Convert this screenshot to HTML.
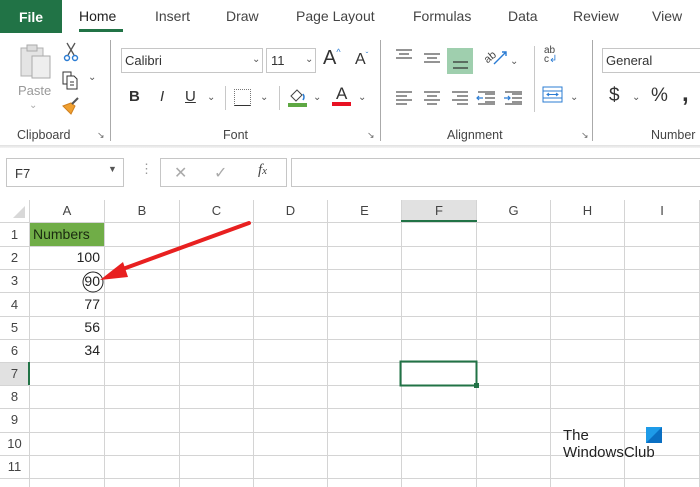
<!DOCTYPE html>
<html><head><meta charset="utf-8"><style>
*{margin:0;padding:0;box-sizing:border-box}
body{width:700px;height:487px;overflow:hidden;background:#fff;font-family:"Liberation Sans",sans-serif;position:relative;color:#333}
.a{position:absolute}
.tab{position:absolute;top:8px;font-size:14px;color:#444}
.lbl{position:absolute;top:128px;font-size:12.5px;color:#444}
.vs{position:absolute;width:1px;background:#c8c8c8}
.chev{position:absolute;font-size:10px;color:#555}
.ch{position:absolute;top:200px;height:22px;font-size:13px;color:#444;text-align:center;line-height:22px}
.rh{position:absolute;left:0;width:29px;font-size:13px;color:#444;text-align:center}
.num{position:absolute;width:73px;text-align:right;padding-right:3px;font-size:14px;color:#222}
</style></head><body>
<!-- tabs -->
<div class="a" style="left:0;top:0;width:62px;height:33px;background:#217346;color:#fff;font-size:14px;font-weight:bold;text-align:center;line-height:34px">File</div>
<div class="tab" style="left:79px;color:#222">Home</div>
<div class="a" style="left:79px;top:29px;width:44px;height:3px;background:#217346"></div>
<div class="tab" style="left:155px">Insert</div>
<div class="tab" style="left:226px">Draw</div>
<div class="tab" style="left:296px">Page Layout</div>
<div class="tab" style="left:413px">Formulas</div>
<div class="tab" style="left:508px">Data</div>
<div class="tab" style="left:573px">Review</div>
<div class="tab" style="left:652px">View</div>
<!-- ribbon -->
<div class="a" style="left:0;top:145px;width:700px;height:3px;background:linear-gradient(#e0e0e0,#f4f4f4)"></div>
<!-- clipboard -->
<svg class="a" style="left:18px;top:42px" width="40" height="40"><rect x="3" y="6" width="22" height="28" fill="#e4e4e4" stroke="#b0b0b0"/><rect x="9" y="3" width="10" height="6" fill="#ddd" stroke="#aaa"/><rect x="14" y="14" width="18" height="22" fill="#eee" stroke="#aaa"/></svg>
<div class="a" style="left:18px;top:83px;font-size:13px;color:#999">Paste</div>
<div class="chev" style="left:29px;top:100px;color:#aaa">⌄</div>
<svg class="a" style="left:63px;top:42px" width="16" height="20"><path d="M4 1 L11 13 M12 1 L5 13" stroke="#555" stroke-width="1.3" fill="none"/><circle cx="4" cy="16" r="2.5" stroke="#2b7cd3" fill="none" stroke-width="1.4"/><circle cx="12" cy="16" r="2.5" stroke="#2b7cd3" fill="none" stroke-width="1.4"/></svg>
<svg class="a" style="left:61px;top:70px" width="20" height="20"><path d="M2 2h8v12H2z" fill="none" stroke="#333"/><path d="M6 6h7l3 3v10H6z" fill="#fff" stroke="#333"/><path d="M9 12h4M9 15h4" stroke="#333"/></svg>
<div class="chev" style="left:88px;top:72px">⌄</div>
<svg class="a" style="left:61px;top:96px" width="20" height="20"><path d="M2 10 L10 18 L14 10 L10 7z" fill="#f0a030" stroke="#d08020"/><path d="M11 8 L17 2" stroke="#555" stroke-width="2"/></svg>
<div class="lbl" style="left:17px">Clipboard</div>
<div class="a" style="left:97px;top:130px;font-size:9px;color:#666">↘</div>
<div class="vs" style="left:110px;top:40px;height:101px;background:#aaa"></div>
<!-- font -->
<div class="a" style="left:121px;top:48px;width:142px;height:25px;border:1px solid #c6c6c6;font-size:13px;padding:4px 3px;color:#333">Calibri</div>
<div class="chev" style="left:252px;top:54px">⌄</div>
<div class="a" style="left:266px;top:48px;width:50px;height:25px;border:1px solid #c6c6c6;font-size:13px;padding:4px 4px;color:#333">11</div>
<div class="chev" style="left:305px;top:54px">⌄</div>
<div class="a" style="left:323px;top:47px;font-size:20px;color:#333">A<span style="font-size:9px;color:#2b7cd3;vertical-align:top">^</span></div>
<div class="a" style="left:355px;top:51px;font-size:16px;color:#333">A<span style="font-size:8px;color:#2b7cd3;vertical-align:top">ˇ</span></div>
<div class="a" style="left:129px;top:88px;font-size:15px;font-weight:bold;color:#333">B</div>
<div class="a" style="left:160px;top:88px;font-size:15px;font-style:italic;color:#333">I</div>
<div class="a" style="left:185px;top:88px;font-size:15px;text-decoration:underline;color:#333">U</div>
<div class="chev" style="left:207px;top:92px">⌄</div>
<div class="vs" style="left:225px;top:86px;height:24px"></div>
<div class="a" style="left:234px;top:89px;width:17px;height:17px;border:1px dotted #777;border-bottom:1px solid #333"></div>
<div class="chev" style="left:260px;top:92px">⌄</div>
<div class="vs" style="left:279px;top:86px;height:24px"></div>
<svg class="a" style="left:287px;top:86px" width="22" height="22"><path d="M4 10 L10 4 L15 9 L9 15z" fill="none" stroke="#444"/><path d="M16 8 q2 3 0 6" stroke="#2b7cd3" fill="none" stroke-width="1.5"/><rect x="1" y="17" width="19" height="4" fill="#5ea843"/></svg>
<div class="chev" style="left:313px;top:92px">⌄</div>
<div class="a" style="left:336px;top:84px;font-size:17px;color:#333">A</div>
<div class="a" style="left:332px;top:102px;width:19px;height:4px;background:#e81123"></div>
<div class="chev" style="left:358px;top:92px">⌄</div>
<div class="lbl" style="left:223px">Font</div>
<div class="a" style="left:367px;top:130px;font-size:9px;color:#666">↘</div>
<div class="vs" style="left:380px;top:40px;height:101px;background:#aaa"></div>
<!-- alignment -->
<svg class="a" style="left:390px;top:44px" width="180" height="70">
<g stroke="#555" stroke-width="1.2">
<path d="M6 6h16M9 10h10M6 14h16"/>
<path d="M34 10h16M37 14h10M34 18h16"/>
</g>
<rect x="57" y="4" width="26" height="26" fill="#9fcfae"/>
<g stroke="#333" stroke-width="1.2"><path d="M63 18h15M63 24h15"/></g>
<text x="94" y="18" font-size="11" fill="#444" font-family="Liberation Sans" transform="rotate(-40 98 14)">ab</text>
<path d="M104 20 L116 8 M112 8h4v4" stroke="#2b7cd3" fill="none" stroke-width="1.4"/>
<text x="120" y="20" font-size="10" fill="#555">⌄</text>
<g stroke="#555" stroke-width="1.2">
<path d="M6 48h16M6 52h11M6 56h16M6 60h11"/>
<path d="M34 48h16M37 52h10M34 56h16M37 60h10"/>
<path d="M62 48h16M67 52h11M62 56h16M67 60h11"/>
<path d="M95 50h10M95 54h10M95 58h10M88 48h17M88 60h17"/>
<path d="M122 50h10M122 54h10M122 58h10M115 48h17M115 60h17"/>
</g>
<path d="M87 54h6M89 52l-2 2 2 2" stroke="#2b7cd3" fill="none" stroke-width="1.2"/>
<path d="M114 54h6M118 52l2 2-2 2" stroke="#2b7cd3" fill="none" stroke-width="1.2"/>
</svg>
<div class="vs" style="left:534px;top:46px;height:66px"></div>
<div class="a" style="left:544px;top:46px;font-size:10px;line-height:9px;color:#444">ab<br>c<span style="color:#2b7cd3">↲</span></div>
<svg class="a" style="left:542px;top:85px" width="22" height="20"><rect x="1" y="2" width="19" height="15" fill="#fff" stroke="#2b7cd3"/><path d="M1 6h19M1 13h19" stroke="#2b7cd3"/><path d="M5 9.5h11M7 8l-2 1.5 2 1.5M14 8l2 1.5-2 1.5" stroke="#2b7cd3" fill="none"/></svg>
<div class="chev" style="left:570px;top:92px">⌄</div>
<div class="lbl" style="left:447px">Alignment</div>
<div class="a" style="left:581px;top:130px;font-size:9px;color:#666">↘</div>
<div class="vs" style="left:592px;top:40px;height:101px;background:#aaa"></div>
<!-- number -->
<div class="a" style="left:602px;top:48px;width:110px;height:25px;border:1px solid #c6c6c6;font-size:13px;padding:4px 3px;color:#333">General</div>
<div class="a" style="left:609px;top:85px;font-size:19px;color:#333">$</div>
<div class="chev" style="left:632px;top:92px">⌄</div>
<div class="a" style="left:651px;top:85px;font-size:19px;color:#333">%</div>
<div class="a" style="left:682px;top:80px;font-size:24px;font-weight:bold;color:#333">,</div>
<div class="lbl" style="left:651px">Number</div>
<!-- formula bar -->
<div class="a" style="left:6px;top:158px;width:118px;height:29px;border:1px solid #c6c6c6;font-size:13px;padding:7px 8px;color:#333">F7</div>
<div class="a" style="left:108px;top:164px;font-size:9px;color:#555">▼</div>
<div class="a" style="left:140px;top:161px;font-size:13px;color:#999">⋮</div>
<div class="a" style="left:160px;top:158px;width:127px;height:29px;border:1px solid #c6c6c6"></div>
<div class="a" style="left:174px;top:163px;font-size:16px;color:#aaa">✕</div>
<div class="a" style="left:214px;top:163px;font-size:16px;color:#aaa">✓</div>
<div class="a" style="left:258px;top:162px;font-size:15px;font-style:italic;font-family:'Liberation Serif',serif;color:#444">f<span style="font-size:11px">x</span></div>
<div class="a" style="left:291px;top:158px;width:420px;height:29px;border:1px solid #c6c6c6"></div>
<!-- grid -->
<svg class="a" style="left:0;top:0" width="700" height="487">
<rect x="401" y="200" width="76" height="22" fill="#e1e1e1"/>
<rect x="0" y="362" width="29" height="23" fill="#e1e1e1"/>
<path d="M25 206 L25 218 L13 218z" fill="#d8d8d8"/>
<g stroke="#d4d4d4" stroke-width="1">
<path d="M29.5 200V487M104.5 200V487M179.5 200V487M253.5 200V487M327.5 200V487M401.5 200V487M476.5 200V487M550.5 200V487M624.5 200V487M699.5 200V487"/>
<path d="M0 222.5H700M0 246.5H700M0 269.5H700M0 292.5H700M0 316.5H700M0 339.5H700M0 362.5H700M0 385.5H700M0 408.5H700M0 432.5H700M0 455.5H700M0 478.5H700"/>
</g>
<rect x="401" y="220" width="76" height="2" fill="#217346"/>
<rect x="28" y="362" width="2" height="23" fill="#217346"/>
<rect x="30" y="223" width="74" height="23" fill="#70ad47"/>
<rect x="400.5" y="361.5" width="76" height="24" fill="none" stroke="#217346" stroke-width="2"/>
<rect x="474" y="383" width="5" height="5" fill="#217346"/>
<circle cx="93" cy="282" r="10" fill="none" stroke="#222" stroke-width="1"/>
<path d="M249 223 L120 270" stroke="#e82020" stroke-width="4" stroke-linecap="round"/>
<path d="M100 280 L123 262 L128 277z" fill="#e82020"/>
</svg>
<div class="ch" style="left:30px;width:74px">A</div>
<div class="ch" style="left:105px;width:74px">B</div>
<div class="ch" style="left:180px;width:73px">C</div>
<div class="ch" style="left:254px;width:73px">D</div>
<div class="ch" style="left:328px;width:73px">E</div>
<div class="ch" style="left:402px;width:74px">F</div>
<div class="ch" style="left:477px;width:73px">G</div>
<div class="ch" style="left:551px;width:73px">H</div>
<div class="ch" style="left:625px;width:74px">I</div>
<div class="rh" style="top:227px">1</div>
<div class="rh" style="top:250px">2</div>
<div class="rh" style="top:273px">3</div>
<div class="rh" style="top:297px">4</div>
<div class="rh" style="top:320px">5</div>
<div class="rh" style="top:343px">6</div>
<div class="rh" style="top:366px">7</div>
<div class="rh" style="top:389px">8</div>
<div class="rh" style="top:412px">9</div>
<div class="rh" style="top:436px">10</div>
<div class="rh" style="top:459px">11</div>
<div class="a" style="left:33px;top:226px;font-size:14px;color:#1a2a10">Numbers</div>
<div class="num" style="left:30px;top:249px">100</div>
<div class="num" style="left:30px;top:273px">90</div>
<div class="num" style="left:30px;top:296px">77</div>
<div class="num" style="left:30px;top:319px">56</div>
<div class="num" style="left:30px;top:342px">34</div>
<!-- watermark -->
<div class="a" style="left:563px;top:427px;font-size:15px;line-height:17px;color:#222">The<br>WindowsClub</div>
<svg class="a" style="left:646px;top:427px" width="16" height="16"><rect width="16" height="16" fill="#1e9be8"/><path d="M0 16 L16 0 V16z" fill="#0a6fc2"/></svg>
</body></html>
